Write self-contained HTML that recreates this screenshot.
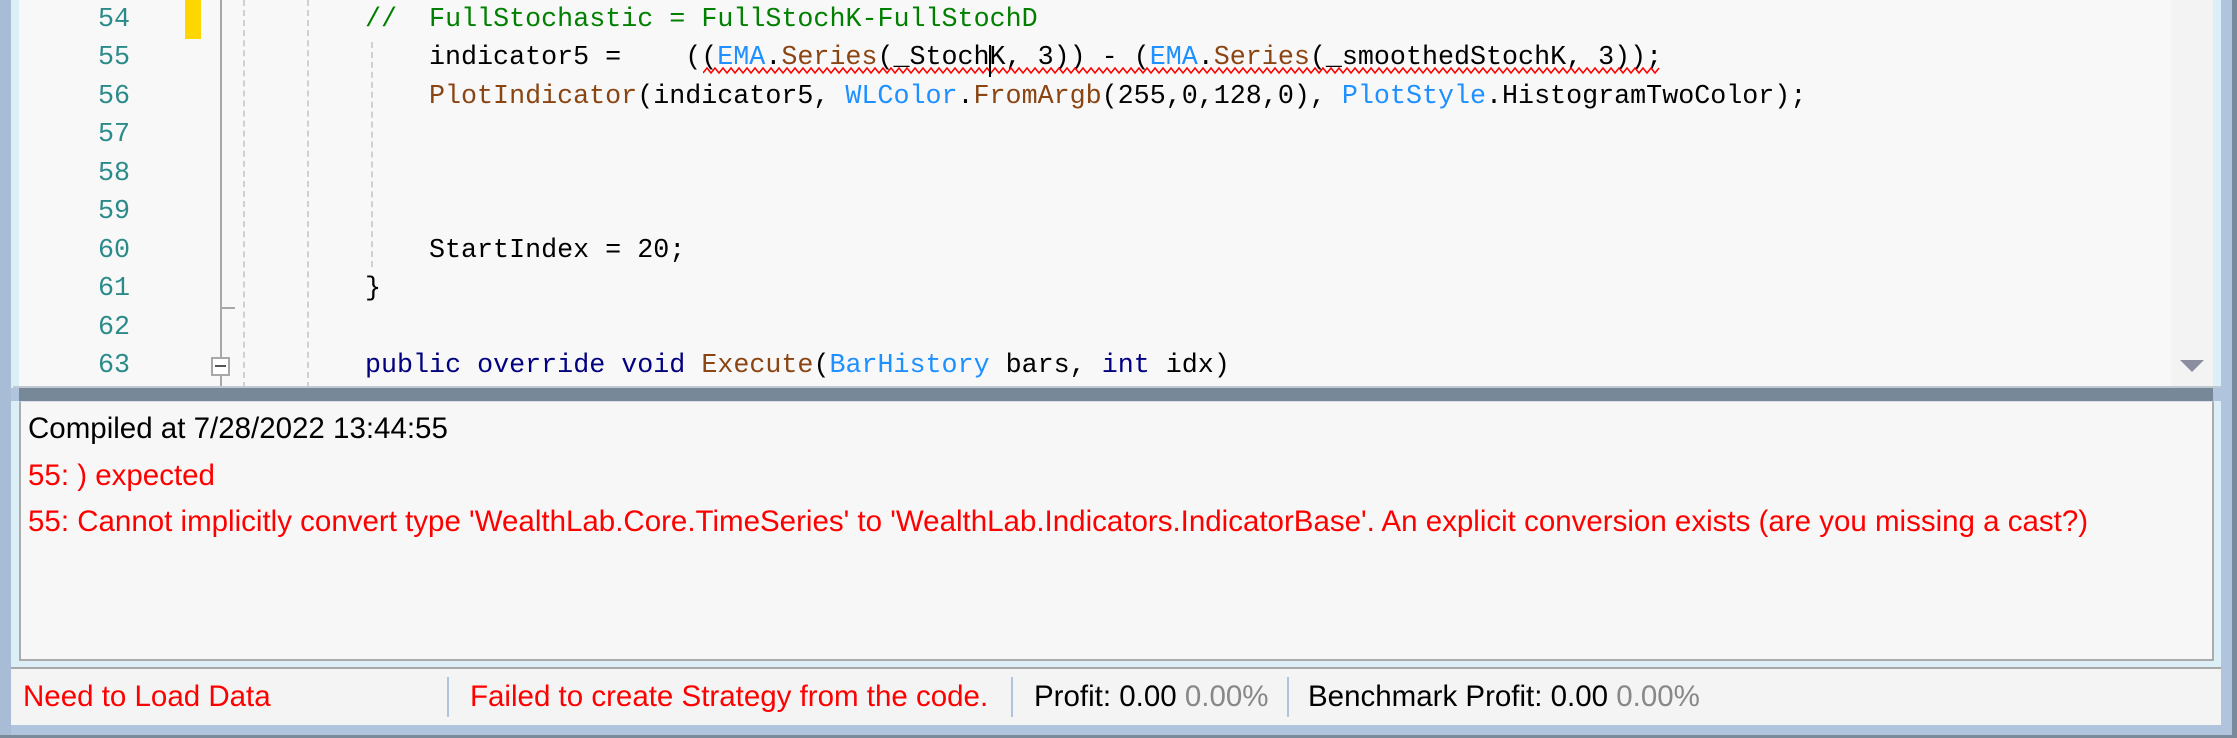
<!DOCTYPE html>
<html><head><meta charset="utf-8"><style>
*{margin:0;padding:0;box-sizing:border-box}
body{width:2237px;height:738px;position:relative;overflow:hidden;background:#b0c4de;font-family:"Liberation Sans",sans-serif}
.abs{position:absolute}
.code{font-family:"Liberation Mono",monospace;font-size:26.7px;white-space:pre;line-height:38.4px;height:38.4px}
.ln{position:absolute;left:60px;width:70px;text-align:right;font-family:"Liberation Mono",monospace;font-size:26.7px;color:#2b8a8a;line-height:38.4px}
.g{color:#008000}.b{color:#1e90ff}.br{color:#8b4513}.k{color:#000080}
.dash{position:absolute;width:0;border-left:2px dashed #d0d0d0}
.msg{position:absolute;left:28px;font-size:29.5px;white-space:nowrap;line-height:32px}
.st{position:absolute;top:681px;font-size:29.5px;white-space:nowrap;line-height:32px}
.sep{position:absolute;top:677px;width:2px;height:40px;background:#b0c4de}
</style></head><body>
<div class="abs" style="left:0;top:0;width:11px;height:738px;background:#a8bcd6"></div>
<div class="abs" style="left:11px;top:0;width:2210px;height:388px;background:#dceef6"></div>
<div class="abs" style="left:19px;top:0;width:2194px;height:388px;background:#f8f8f8"></div>
<div class="abs" style="left:2171px;top:0;width:42px;height:388px;background:#f3f3f3"></div>
<div class="abs" style="left:2180px;top:360px;width:0;height:0;border-left:12px solid transparent;border-right:12px solid transparent;border-top:12px solid #8a8ea0"></div>
<div class="abs" style="left:185px;top:0;width:16px;height:39px;background:#ffd700"></div>
<div class="abs" style="left:220px;top:0;width:2px;height:388px;background:#a8a8a8"></div>
<div class="abs" style="left:220px;top:307px;width:15px;height:2px;background:#a8a8a8"></div>
<div class="abs" style="left:211px;top:357px;width:19px;height:19px;border:2px solid #a8a8a8;background:#fff"></div>
<div class="abs" style="left:215px;top:365px;width:11px;height:2px;background:#555"></div>
<div class="dash" style="left:243px;top:0;height:388px"></div>
<div class="dash" style="left:307px;top:0;height:388px"></div>
<div class="dash" style="left:371px;top:42px;height:225px"></div>
<div class="ln" style="top:1px">54</div>
<div class="ln" style="top:39px">55</div>
<div class="ln" style="top:78px">56</div>
<div class="ln" style="top:116px">57</div>
<div class="ln" style="top:155px">58</div>
<div class="ln" style="top:193px">59</div>
<div class="ln" style="top:232px">60</div>
<div class="ln" style="top:270px">61</div>
<div class="ln" style="top:309px">62</div>
<div class="ln" style="top:347px">63</div>
<div class="abs code g" style="left:365px;top:1px">//  FullStochastic = FullStochK-FullStochD</div>
<div class="abs code" style="left:429px;top:39px">indicator5 =    ((<span class="b">EMA</span>.<span class="br">Series</span>(_StochK, 3)) - (<span class="b">EMA</span>.<span class="br">Series</span>(_smoothedStochK, 3));</div>
<svg class="abs" style="left:703px;top:66px" width="960" height="10"><polyline fill="none" stroke="#ff0000" stroke-width="1.5" points="0,7 4,2 8,7 12,2 16,7 20,2 24,7 28,2 32,7 36,2 40,7 44,2 48,7 52,2 56,7 60,2 64,7 68,2 72,7 76,2 80,7 84,2 88,7 92,2 96,7 100,2 104,7 108,2 112,7 116,2 120,7 124,2 128,7 132,2 136,7 140,2 144,7 148,2 152,7 156,2 160,7 164,2 168,7 172,2 176,7 180,2 184,7 188,2 192,7 196,2 200,7 204,2 208,7 212,2 216,7 220,2 224,7 228,2 232,7 236,2 240,7 244,2 248,7 252,2 256,7 260,2 264,7 268,2 272,7 276,2 280,7 284,2 288,7 292,2 296,7 300,2 304,7 308,2 312,7 316,2 320,7 324,2 328,7 332,2 336,7 340,2 344,7 348,2 352,7 356,2 360,7 364,2 368,7 372,2 376,7 380,2 384,7 388,2 392,7 396,2 400,7 404,2 408,7 412,2 416,7 420,2 424,7 428,2 432,7 436,2 440,7 444,2 448,7 452,2 456,7 460,2 464,7 468,2 472,7 476,2 480,7 484,2 488,7 492,2 496,7 500,2 504,7 508,2 512,7 516,2 520,7 524,2 528,7 532,2 536,7 540,2 544,7 548,2 552,7 556,2 560,7 564,2 568,7 572,2 576,7 580,2 584,7 588,2 592,7 596,2 600,7 604,2 608,7 612,2 616,7 620,2 624,7 628,2 632,7 636,2 640,7 644,2 648,7 652,2 656,7 660,2 664,7 668,2 672,7 676,2 680,7 684,2 688,7 692,2 696,7 700,2 704,7 708,2 712,7 716,2 720,7 724,2 728,7 732,2 736,7 740,2 744,7 748,2 752,7 756,2 760,7 764,2 768,7 772,2 776,7 780,2 784,7 788,2 792,7 796,2 800,7 804,2 808,7 812,2 816,7 820,2 824,7 828,2 832,7 836,2 840,7 844,2 848,7 852,2 856,7 860,2 864,7 868,2 872,7 876,2 880,7 884,2 888,7 892,2 896,7 900,2 904,7 908,2 912,7 916,2 920,7 924,2 928,7 932,2 936,7 940,2 944,7 948,2 952,7 956,2"/></svg>
<div class="abs" style="left:989px;top:45px;width:2px;height:32px;background:#000"></div>
<div class="abs code" style="left:429px;top:78px"><span class="br">PlotIndicator</span>(indicator5, <span class="b">WLColor</span>.<span class="br">FromArgb</span>(255,0,128,0), <span class="b">PlotStyle</span>.HistogramTwoColor);</div>
<div class="abs code" style="left:429px;top:232px">StartIndex = 20;</div>
<div class="abs code" style="left:365px;top:270px">}</div>
<div class="abs code" style="left:365px;top:347px"><span class="k">public override void</span> <span class="br">Execute</span>(<span class="b">BarHistory</span> bars, <span class="k">int</span> idx)</div>
<div class="abs" style="left:13px;top:386px;width:2208px;height:2px;background:#c0c8d0"></div>
<div class="abs" style="left:19px;top:388px;width:2194px;height:13px;background:#778899"></div>
<div class="abs" style="left:11px;top:401px;width:2210px;height:266px;background:#dceef6"></div>
<div class="abs" style="left:19px;top:401px;width:2195px;height:260px;background:#f7f7f7;border:2px solid #ababab;border-top:1px solid #dde"></div>
<div class="msg" style="top:413px;color:#000">Compiled at 7/28/2022 13:44:55</div>
<div class="msg" style="top:460px;color:#f00">55: ) expected</div>
<div class="msg" style="top:506px;color:#f00">55: Cannot implicitly convert type 'WealthLab.Core.TimeSeries' to 'WealthLab.Indicators.IndicatorBase'. An explicit conversion exists (are you missing a cast?)</div>
<div class="abs" style="left:11px;top:667px;width:2210px;height:2px;background:#a8a8a8"></div>
<div class="abs" style="left:11px;top:669px;width:2210px;height:56px;background:#f4f4f4"></div>
<div class="abs" style="left:2232px;top:0;width:5px;height:738px;background:#7a8a9a"></div>
<div class="abs" style="left:0;top:735px;width:2237px;height:3px;background:#7a8a9a"></div>
<div class="st" style="left:23px;color:#f00">Need to Load Data</div>
<div class="sep" style="left:447px"></div>
<div class="st" style="left:470px;color:#f00">Failed to create Strategy from the code.</div>
<div class="sep" style="left:1011px"></div>
<div class="st" style="left:1034px;color:#000">Profit: 0.00 <span style="color:#888">0.00%</span></div>
<div class="sep" style="left:1287px"></div>
<div class="st" style="left:1308px;color:#000">Benchmark Profit: 0.00 <span style="color:#888">0.00%</span></div>
</body></html>
